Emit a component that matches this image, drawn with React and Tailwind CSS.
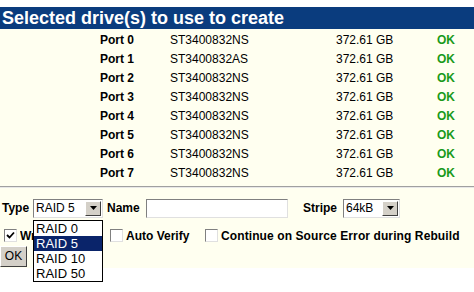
import React from "react";

const drives = [
  { port: "Port 0", model: "ST3400832NS", size: "372.61 GB", status: "OK" },
  { port: "Port 1", model: "ST3400832AS", size: "372.61 GB", status: "OK" },
  { port: "Port 2", model: "ST3400832NS", size: "372.61 GB", status: "OK" },
  { port: "Port 3", model: "ST3400832NS", size: "372.61 GB", status: "OK" },
  { port: "Port 4", model: "ST3400832NS", size: "372.61 GB", status: "OK" },
  { port: "Port 5", model: "ST3400832NS", size: "372.61 GB", status: "OK" },
  { port: "Port 6", model: "ST3400832NS", size: "372.61 GB", status: "OK" },
  { port: "Port 7", model: "ST3400832NS", size: "372.61 GB", status: "OK" },
];

// Windows-classic arrow button for the selects
const ArrowButton = () => (
  <div className="w-[16px] h-[15px] bg-[#d4d0c8] border border-t-white border-l-white border-r-[#404040] border-b-[#404040] flex items-center justify-center">
    <svg width="7" height="4" viewBox="0 0 7 4">
      <path d="M0 0h7L3.5 4z" fill="#000" />
    </svg>
  </div>
);

const Checkbox = ({ checked }) => (
  <div className="w-[13px] h-[13px] bg-white border border-t-[#808080] border-l-[#808080] border-r-[#e0e0e0] border-b-[#e0e0e0] flex items-center justify-center">
    {checked && (
      <svg width="9" height="9" viewBox="0 0 9 9">
        <path d="M1 4l2.5 2.5L8 1.5" stroke="#000" strokeWidth="1.8" fill="none" />
      </svg>
    )}
  </div>
);

const App = () => {
  const raidTypes = ["RAID 0", "RAID 5", "RAID 10", "RAID 50"];

  return (
    <div className="w-[474px] h-[292px] bg-white overflow-hidden text-[12px] text-black font-['Liberation_Sans',Arial,sans-serif]">
      <div className="h-[7px]" />

      {/* En-tête */}
      <div className="h-[22px] bg-[#0a3c7e] text-white font-bold text-[18px] leading-[22px] pl-[2px] whitespace-nowrap">
        Selected drive(s) to use to create
      </div>

      <div className="bg-[#fffff0] pt-[2px]">
        {/* Liste des disques */}
        {drives.map((d) => (
          <div
            key={d.port}
            className="h-[19px] grid grid-cols-[100px_70px_166px_101px_1fr] items-center leading-[19px] whitespace-nowrap"
          >
            <span />
            <span className="font-bold">{d.port}</span>
            <span>{d.model}</span>
            <span>{d.size}</span>
            <span className="font-bold text-[#1a9a1a]">{d.status}</span>
          </div>
        ))}

        {/* Séparateur */}
        <div className="mt-[3px] border-t border-t-[#a0a0a0] border-b border-b-[#e8e8e8]" />

        {/* Formulaire */}
        <div className="mt-[10px] h-[20px] flex items-center whitespace-nowrap">
          <span className="font-bold ml-[2px] w-[31px]">Type</span>
          <div className="relative">
            <div className="w-[70px] h-[19px] bg-white border border-t-[#808080] border-l-[#808080] border-r-[#e0e0e0] border-b-[#e0e0e0] flex items-center justify-between pl-[2px] pr-[1px]">
              <span>RAID 5</span>
              <ArrowButton />
            </div>
            <div className="absolute left-0 top-[21px] w-[70px] bg-white border border-black z-10 text-[13px]">
              {raidTypes.map((t) => (
                <div
                  key={t}
                  className={
                    t === "RAID 5"
                      ? "h-[15px] leading-[15px] pl-[2px] bg-[#0a246a] text-white"
                      : "h-[15px] leading-[15px] pl-[2px]"
                  }
                >
                  {t}
                </div>
              ))}
            </div>
          </div>
          <span className="font-bold ml-[4px] w-[39px]">Name</span>
          <div className="w-[142px] h-[19px] bg-white border border-t-[#808080] border-l-[#808080] border-r-[#e0e0e0] border-b-[#e0e0e0]" />
          <span className="font-bold ml-[15px] w-[40px]">Stripe</span>
          <div className="w-[57px] h-[19px] bg-white border border-t-[#808080] border-l-[#808080] border-r-[#e0e0e0] border-b-[#e0e0e0] flex items-center justify-between pl-[2px] pr-[1px]">
            <span>64kB</span>
            <ArrowButton />
          </div>
        </div>

        <div className="mt-[10px] h-[15px] flex items-center whitespace-nowrap font-bold">
          <div className="ml-[4px]">
            <Checkbox checked />
          </div>
          {/* partly hidden under the open list */}
          <span className="ml-[3px] w-[16px] overflow-hidden">Write Back</span>
          <span className="w-[74px]" />
          <Checkbox />
          <span className="ml-[3px] w-[79px]">Auto Verify</span>
          <Checkbox />
          <span className="ml-[3px] tracking-[0.1px]">Continue on Source Error during Rebuild</span>
        </div>

        <div className="mt-[3px] pb-[1px]">
          <button className="w-[27px] h-[21px] bg-[#d4d0c8] border border-t-white border-l-white border-r-[#404040] border-b-[#404040] text-[12px] leading-[19px]">
            OK
          </button>
        </div>
      </div>
    </div>
  );
};

export default App;
